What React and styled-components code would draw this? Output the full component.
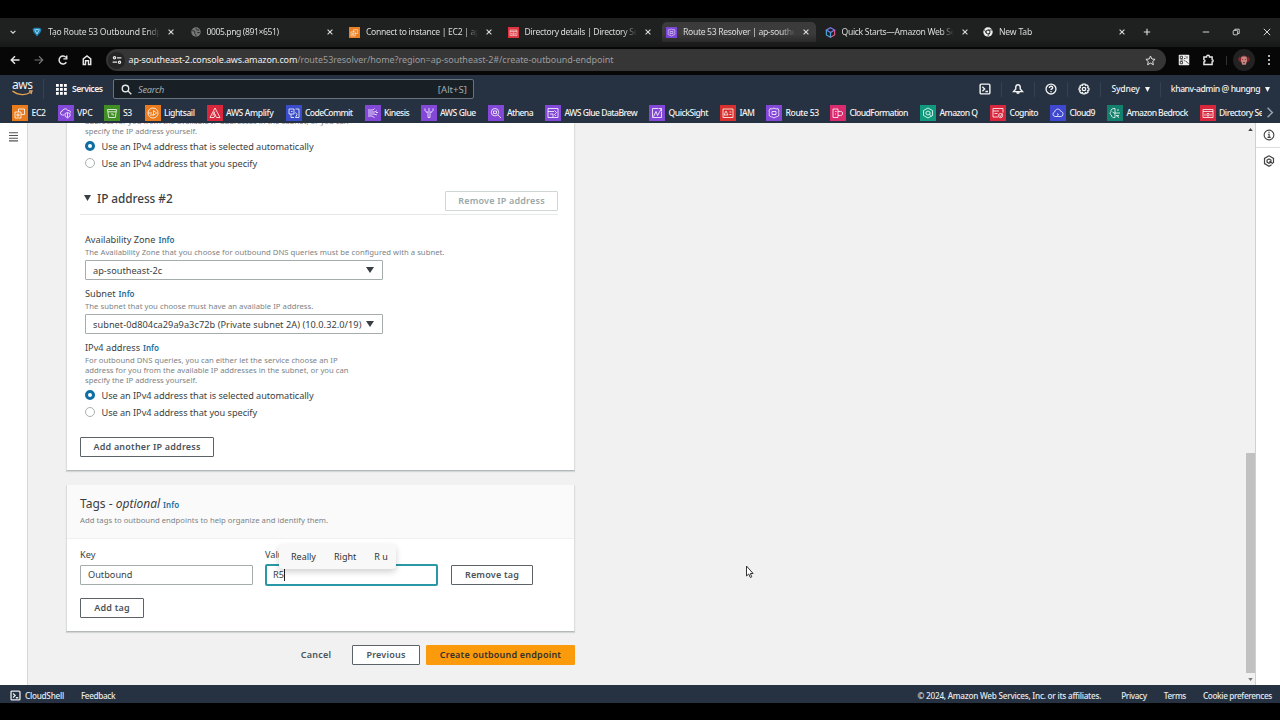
import React, { useState } from "react";
import styled, { createGlobalStyle } from "styled-components";

const GlobalStyle = createGlobalStyle`
  * { box-sizing: border-box; }
  body {
    margin: 0;
    background: #000;
    font-family: "Noto Sans", "Open Sans", sans-serif;
    overflow: hidden;
  }
  button, input { font-family: inherit; }
  svg { display: block; flex: none; }
`;

const Screen = styled.div`
  width: 1280px;
  height: 720px;
  padding: 18px 0 17px;
  background: #000;
  display: flex;
  flex-direction: column;
`;

/* ---------- browser ---------- */

const TabStrip = styled.div`
  height: 29px;
  flex: none;
  display: flex;
  align-items: flex-start;
  padding-top: 4px;
  background: linear-gradient(#1f2020 0, #1f2020 70%, #181818 100%);
  color: #dcdcdc;
`;

const TabSearch = styled.div`
  width: 28px;
  height: 20px;
  padding-left: 10px;
  display: flex;
  align-items: center;
`;

const Tab = styled.div`
  width: ${(p) => (p.$active ? 153.5 : 158.5)}px;
  height: 20px;
  flex: none;
  display: flex;
  align-items: center;
  padding-left: 4px;
  margin-right: ${(p) => (p.$active ? 5 : 0)}px;
  border-radius: 5px 5px 0 0;
  background: ${(p) => (p.$active ? "linear-gradient(#3b3b3c 60%, #2a2a2b)" : "transparent")};
`;

const TabTitle = styled.div`
  width: 112px;
  margin: 0 8px 0 6px;
  font-size: 8.6px;
  line-height: 18px;
  letter-spacing: ${(p) => p.$ls || -0.32}px;
  white-space: nowrap;
  overflow: hidden;
  mask-image: linear-gradient(90deg, #000 88%, transparent);
`;

const NewTabButton = styled.div`
  height: 20px;
  display: flex;
  align-items: center;
  margin-left: 5px;
`;

const WindowButtons = styled.div`
  height: 20px;
  display: flex;
  align-items: center;
  gap: 22.5px;
  margin-left: 51px;
`;

const Toolbar = styled.div`
  height: 28px;
  flex: none;
  display: flex;
  align-items: center;
  padding: 0 0 2px 9px;
  background: #070707;
  color: #e8e8e8;
`;

const NavIcons = styled.div`
  width: 97px;
  display: flex;
  gap: 12px;
  align-items: center;
`;

const UrlBar = styled.div`
  width: 1060px;
  height: 22px;
  border-radius: 11px;
  background: #363637;
  display: flex;
  align-items: center;
  padding: 0 10px 0 2px;
`;

const SiteInfo = styled.div`
  width: 17px;
  height: 17px;
  border-radius: 50%;
  background: #252526;
  display: flex;
  align-items: center;
  justify-content: center;
`;

const UrlText = styled.div`
  flex: 1;
  margin-left: 3.5px;
  padding-bottom: 1px;
  font-size: 9px;
  letter-spacing: -0.05px;
  color: #9c9c9c;
  b {
    font-weight: 400;
    letter-spacing: -0.14px;
    color: #f0f0f0;
  }
`;

const Extensions = styled.div`
  display: flex;
  align-items: center;
  gap: 12px;
  margin-left: 12px;
`;

const ExtDivider = styled.div`
  width: 1px;
  height: 9px;
  background: #333;
`;

const Avatar = styled.div`
  width: 22px;
  height: 22px;
  border-radius: 50%;
  background: #222;
  display: flex;
  align-items: center;
  justify-content: center;
  margin: 0 0 0 -6px;
`;

/* ---------- aws header ---------- */

const Header = styled.div`
  height: 28px;
  flex: none;
  display: flex;
  align-items: center;
  background: #263241;
  color: #f2f3f3;
  font-size: 9px;
`;

const Logo = styled.div`
  width: 44px;
  height: 20px;
  padding: 0 0 0 12px;
  border-right: 1px solid #36424f;
  display: flex;
  flex-direction: column;
  font-size: 12px;
  line-height: 11px;
  letter-spacing: -0.4px;
`;

const Services = styled.div`
  display: flex;
  align-items: center;
  gap: 5px;
  width: 69px;
  padding-left: 12px;
  font-weight: 600;
  font-size: 8.6px;
  letter-spacing: -0.45px;
`;

const SearchBox = styled.div`
  width: 361px;
  height: 20px;
  border: 1px solid #67737f;
  border-radius: 2px;
  background: #182026;
  display: flex;
  align-items: center;
  padding: 0 6px 0 7px;
  color: #a3abae;
  font-size: 9.6px;
  em {
    flex: 1;
    margin-left: 6px;
    font-size: 9.2px;
    letter-spacing: -0.2px;
  }
`;

const HeaderActions = styled.div`
  margin-left: auto;
  display: flex;
  align-items: center;
  font-size: 8.6px;
  font-weight: 500;
`;

const HeaderAction = styled.div`
  width: ${(p) => p.$w}px;
  height: 15px;
  display: flex;
  align-items: center;
  justify-content: center;
  gap: 5px;
  white-space: nowrap;
  letter-spacing: ${(p) => p.$ls || 0}px;
  border-left: ${(p) => (p.$first ? "none" : "1px solid #344150")};
`;

const Favorites = styled.div`
  height: 20px;
  flex: none;
  display: flex;
  align-items: center;
  padding: 0 0 1px 12px;
  background: #263241;
  color: #f2f3f3;
`;

const Favorite = styled.div`
  width: ${(p) => p.$w}px;
  flex: none;
  display: flex;
  align-items: center;
  gap: 3.5px;
  overflow: hidden;
  white-space: nowrap;
  font-size: 8.6px;
  line-height: 16px;
  font-weight: 500;
  letter-spacing: ${(p) => p.$ls}px;
`;

const ServiceTile = styled.div`
  width: ${(p) => p.$size || 16}px;
  height: ${(p) => p.$size || 16}px;
  flex: none;
  background: ${(p) => p.$color};
  display: flex;
  svg {
    width: 100%;
    height: 100%;
  }
`;

/* ---------- page ---------- */

const Body = styled.div`
  height: 562px;
  flex: none;
  display: flex;
  background: #f1f1f1;
  color: #3a3f44;
`;

const LeftRail = styled.div`
  width: 28px;
  flex: none;
  background: #fff;
  border-right: 1px solid #d8d8d8;
  padding: 9px 0 0 9px;
`;

const Main = styled.div`
  width: 1218px;
  height: 562px;
  overflow: hidden;
  padding-left: 38px;
`;

const Column = styled.div`
  width: 509px;
`;

const Panel = styled.div`
  background: #fff;
  border: 1px solid #dcdede;
  border-top: none;
  border-bottom: 1px solid #b4b8b8;
  box-shadow: 0 1px 1px rgba(0, 28, 36, 0.12);
`;

const AddressPanel = styled(Panel)`
  height: 348px;
  overflow: hidden;
`;

const Field = styled.div`
  margin-left: 18px;
  margin-top: ${(p) => p.$mt || 0}px;
`;

const Label = styled.div`
  font-size: 9.2px;
  line-height: 12px;
  white-space: nowrap;
`;

const Info = styled.a`
  font-size: 8px;
  font-weight: 600;
  color: #1a6e9d;
  margin-left: 3px;
`;

const Description = styled.div`
  width: ${(p) => p.$w || 440}px;
  margin-top: ${(p) => p.$mt || 1}px;
  font-size: 7.7px;
  line-height: 10px;
  letter-spacing: ${(p) => p.$ls || 0.03}px;
  white-space: nowrap;
  color: #7c8386;
`;

const RadioRow = styled.div`
  height: 16px;
  margin-top: 1px;
  display: flex;
  align-items: center;
  gap: 6.5px;
  font-size: 9.2px;
  letter-spacing: -0.05px;
`;

const RadioGroup = styled.div`
  padding-top: 1px;
`;

const Radio = styled.span`
  width: 10px;
  height: 10px;
  border-radius: 50%;
  background: #fff;
  border: ${(p) => (p.$checked ? "3px solid #0f6ea3" : "1px solid #a9afb0")};
`;

const SectionHead = styled.div`
  height: 25px;
  margin: 19px 16px 0 13px;
  border-bottom: 1px solid #e6e9e9;
  display: flex;
  align-items: flex-start;
  justify-content: space-between;
`;

const SectionTitle = styled.div`
  display: flex;
  align-items: center;
  gap: 6px;
  height: 16px;
  padding-left: 4px;
  font-size: 11.8px;
  font-weight: 500;
  letter-spacing: -0.05px;
`;

const Button = styled.button`
  width: ${(p) => p.$w}px;
  height: 20px;
  margin: ${(p) => p.$m || "0"};
  padding: 0 0 1px;
  display: block;
  flex: none;
  border-radius: 1px;
  border: 1px solid ${(p) => (p.disabled ? "#d0d6d6" : "#5c6368")};
  background: #fff;
  color: ${(p) => (p.disabled ? "#9aa8a8" : "#4b5359")};
  font-size: 9px;
  font-weight: 600;
  letter-spacing: 0.2px;
  white-space: nowrap;
`;

const PrimaryButton = styled(Button)`
  background: #fb9b0c;
  border-color: #fb9b0c;
  color: #33302a;
`;

const LinkButton = styled(Button)`
  border-color: transparent;
  background: transparent;
`;

const Select = styled.div`
  width: 298px;
  height: 20px;
  margin-top: 3px;
  border: 1px solid #a5acac;
  border-radius: 1px;
  display: flex;
  align-items: center;
  justify-content: space-between;
  padding: 0 8px 0 7px;
  font-size: 9.2px;
  letter-spacing: ${(p) => p.$ls || 0}px;
  white-space: nowrap;
`;

const TagsPanel = styled(Panel)`
  height: 147px;
  margin-top: 14px;
`;

const TagsHead = styled.div`
  height: 54px;
  padding: 11px 13px 0;
  background: #fafafa;
  border-bottom: 1px solid #eff1f1;
`;

const TagsTitle = styled.div`
  font-size: 12px;
  line-height: 16px;
`;

const TagGrid = styled.div`
  display: grid;
  grid-template-columns: 173px 173px 83px;
  column-gap: 12px;
  row-gap: 4px;
  padding: 10px 13px 0;
  align-items: end;
  justify-items: stretch;
`;

const ValueCell = styled.div`
  position: relative;
`;

const TextBox = styled.div`
  height: 20px;
  border: 1px solid #a5acac;
  border-radius: 1px;
  padding: 0 7px 1px;
  display: flex;
  align-items: center;
  font-size: 9.2px;
`;

const FocusedBox = styled(TextBox)`
  height: 22px;
  margin: -1px 0;
  border: 2px solid #2a98a5;
  border-radius: 2px;
  padding: 0 6px 1px;
`;

const Caret = styled.span`
  width: 1px;
  height: 12px;
  background: #222;
`;

/* IME suggestions float over the label and the input */
const Suggestions = styled.div`
  position: absolute;
  left: 14px;
  top: -21px;
  width: 117px;
  height: 25px;
  border-radius: 4px;
  background: #f8f8f8;
  box-shadow: 0 3px 6px rgba(0, 0, 0, 0.18);
  display: flex;
  align-items: center;
  gap: 18px;
  padding-left: 12px;
  font-size: 9px;
  white-space: nowrap;
  color: #333;
`;

const Actions = styled.div`
  display: flex;
  justify-content: flex-end;
  gap: 6px;
  margin-top: 13px;
`;

const Scrollbar = styled.div`
  width: 9px;
  flex: none;
  display: flex;
  flex-direction: column;
  align-items: center;
  justify-content: space-between;
  padding: 5px 0 4px;
  background: #f1f1f1;
`;

const Thumb = styled.div`
  width: 9px;
  height: 220px;
  margin-top: auto;
  margin-bottom: 5px;
  background: #c1c1c1;
`;

const RightRail = styled.div`
  flex: 1;
  background: #fff;
  border-left: 1px solid #d0d0d0;
`;

const RailButton = styled.div`
  height: 25px;
  padding-left: 2px;
  display: flex;
  align-items: center;
  justify-content: center;
  border-bottom: ${(p) => (p.$line ? "1px solid #ddd" : "none")};
`;

const Footer = styled.div`
  height: 18px;
  flex: none;
  display: flex;
  align-items: center;
  padding: 2px 8px 0 10px;
  background: #263241;
  color: #e6ebee;
  font-size: 8.2px;
  font-weight: 500;
`;

const FooterItem = styled.span`
  margin-left: ${(p) => p.$ml}px;
  letter-spacing: ${(p) => p.$ls || -0.35}px;
  white-space: nowrap;
`;

const FooterSpacer = styled.span`
  flex: 1;
`;

const Pointer = styled.svg`
  position: absolute;
  left: 745px;
  top: 565px;
`;

/* ---------- icons ---------- */

const Icon = ({ w = 10, h, box = 16, sw = 1.6, children }) => (
  <svg
    width={w}
    height={h || w}
    viewBox={`0 0 ${box} ${box}`}
    fill="none"
    stroke="currentColor"
    strokeWidth={sw}
  >
    {children}
  </svg>
);

const CloseIcon = ({ w = 6, sw = 1.8 }) => (
  <Icon w={w} box={10} sw={sw}>
    <path d="M1 1l8 8M9 1l-8 8" />
  </Icon>
);

const Down = ({ w = 8, h = 6 }) => (
  <svg width={w} height={h} viewBox="0 0 8 6" preserveAspectRatio="none" fill="currentColor">
    <path d="M0 0h8L4 6z" />
  </svg>
);

const ShellIcon = ({ w = 12 }) => (
  <Icon w={w} sw={1.9}>
    <rect x="1.5" y="1.5" width="13" height="13" rx="1.5" />
    <path d="M4.5 5l3 3-3 3M8.5 11.3h3.5" />
  </Icon>
);

const glyphs = {
  ec2: <path d="M3 7h6v6H3zM6.500 7V4H12.500v5.500H9M5 9h2v2H5z" />,
  vpc: <path d="M6 10H4.500a2 2 0 010-4c.3-2.500 4.500-3 5.200-.500 2-.3 3 .8 2.800 2M7 8.500l2.500-1 2.500 1v2.500l-2.500 2-2.500-2zM9.500 8v4.500" />,
  s3: <path d="M3.500 4.500h9l-1.200 8H4.700zM4 6.800h8M7 9h2.200v1.700" />,
  lightsail: <path d="M8 3a5 5 0 100 10A5 5 0 008 3zM3 8h4M5 10h3M8.500 5.500v4.800L11.500 8z" />,
  amplify: <path d="M8 3L3 12.500h4L8.500 9.500M8 3l5 9.500H9.500L6.500 7.500M5.800 10.500L8 6.500" />,
  commit: <path d="M3 4h5v5H3zM5 9v3.500h3M9.500 4H13v8.500H9.500l1.500-3-1.500-2M5 6.500h1.500" />,
  kinesis: <path d="M3 5h5l1.500-1.500M3 7h7l2-1.500M3 9h6l3 1M3 11h4l2.500 1.500M11 7.500h2" />,
  glue: <path d="M4 3.500v2L7 8.500v4h2v-4l3-3v-2M8 3v3M5.500 7h5" />,
  athena: <path d="M7 3.500a3.700 3.700 0 100 7.400 3.700 3.700 0 000-7.400zM10 10l3 3M5.500 6h3v2.500h-3z" />,
  databrew: <path d="M3 3.500h10v9H3zM3 6.500h6M5 9h3v3M9.500 5.500l2 2-2 2 1.500 1.500" />,
  quicksight: <path d="M12.500 6.500v6h-9v-9h6M4.500 11.500l2.500-5 1.500 4L12.500 3.500M10 3.500h2.500V6" />,
  iam: <path d="M3 4h10v8.500H3zM6 6l2 4H4zM9.500 7h2M9.500 9.500h2" />,
  route53: <path d="M4 3.500c1.500.800 2.500.5 4-.5 1.500 1 2.500 1.300 4 .5l1 2.500c-1 2 .500 3-.5 5-1.500 1-3 .800-4.500 2-1.500-1.200-3-1-4.500-2-1-2 .500-3-.5-5zM6 6.500h4v3H6z" />,
  cfn: <path d="M3 4h5v8.500H3zM5 6.500h1.500M5 9h1M8 6.500h2.500a1.800 1.800 0 012 2.500c0 1-.8 1.500-2 1.500H8" />,
  q: <path d="M8 3l4.500 2.500v5L8 13l-4.500-2.500v-5zM8 6l2 1v2l-2 1-2-1V7zM9 9l2.500 2" />,
  cognito: <path d="M8 12H3V3.500h10v4M3 6h6M4.500 8.500h3M10.500 8.500a2 2 0 100 4.200 2 2 0 000-4.200zM9.500 10.500l1 1 2-3" />,
  cloud9: <path d="M5 11.500a2.300 2.300 0 01-.3-4.500c.3-3.500 5.300-3.800 6-.700 3 .200 3 5.200.3 5.200zM7 8.500l1.500 1L7 10.500" />,
  bedrock: <path d="M8 3.500C5 3 3.500 5 4 6.500c-1.500 1.500-1 3 .3 3.500 0 2 2 3 3.700 2.500zM5.500 7L8 8.500M10 5h2M8 8h5M9 10.500h3M12 12.500L9.500 11" />,
  directory: <path d="M3 4.500h10v8H3zM3 6.500h10M5 8.500v2.500M7 8.500h2v2.500H7zM11 8.500v2.500" />,
};

const Tile = ({ name, color, size }) => (
  <ServiceTile $color={color} $size={size}>
    <svg viewBox="0 0 16 16" fill="none" stroke="#fff" strokeOpacity=".88" strokeWidth=".9">
      {glyphs[name]}
    </svg>
  </ServiceTile>
);

const tabs = [
  {
    title: "Tạo Route 53 Outbound Endpoint",
    ls: -0.2,
    icon: (
      <Icon w={10}>
        <path d="M1 3l3-2h8l3 2-1 5-6 7-6-7z" fill="#1d83b5" stroke="none" />
        <path d="M4 4l4 7 4-7M5.500 4h5" stroke="#a5dbf2" />
      </Icon>
    ),
  },
  {
    title: "0005.png (891×651)",
    ls: -0.42,
    icon: (
      <Icon w={10}>
        <circle cx="8" cy="8" r="7.500" fill="#777" stroke="none" />
        <path d="M2 6c4 0 5 1 4 3s2 2 2 5M8 2c0 3 2 3 5 3M10 9h4" stroke="#242424" />
      </Icon>
    ),
  },
  { title: "Connect to instance | EC2 | ap-southeast", icon: <Tile name="ec2" color="#ec7f22" size={11} /> },
  { title: "Directory details | Directory Service", icon: <Tile name="directory" color="#dc3540" size={11} /> },
  { title: "Route 53 Resolver | ap-southeast", icon: <Tile name="route53" color="#7b45d6" size={11} />, active: true },
  {
    title: "Quick Starts—Amazon Web Services",
    icon: (
      <Icon w={11} sw={1.7}>
        <path d="M8 1l6 3.500L8 8 2 4.500z" stroke="#7a7cf0" />
        <path d="M2 4.500v7L8 15V8" stroke="#48a9dd" />
        <path d="M8 15l6-3.500v-7" stroke="#e35a8d" />
      </Icon>
    ),
  },
  {
    title: "New Tab",
    ls: -0.2,
    icon: (
      <Icon w={10}>
        <circle cx="8" cy="8" r="7.500" fill="#eee" stroke="none" />
        <circle cx="8" cy="8" r="3.200" stroke="#222" />
        <path d="M8 4.800h7M5.200 9.500L2 4M10.800 9.500L7.500 15" stroke="#222" strokeWidth="1.300" />
      </Icon>
    ),
  },
];

// label, glyph, tile colour, cell width, letter spacing
const favorites = [
  ["EC2", "ec2", "#ea7b1c", 45.5, -0.4],
  ["VPC", "vpc", "#8348d8", 46, -0.2],
  ["S3", "s3", "#3f8f25", 41, -0.4],
  ["Lightsail", "lightsail", "#ea7b1c", 62, -0.45],
  ["AWS Amplify", "amplify", "#d8273c", 79, -0.4],
  ["CodeCommit", "commit", "#3b4ccb", 79, -0.62],
  ["Kinesis", "kinesis", "#8348d8", 56, -0.5],
  ["AWS Glue", "glue", "#8348d8", 67, -0.42],
  ["Athena", "athena", "#8348d8", 57.5, -0.6],
  ["AWS Glue DataBrew", "databrew", "#8348d8", 104, -0.53],
  ["QuickSight", "quicksight", "#8348d8", 71, -0.5],
  ["IAM", "iam", "#d8302f", 46, -0.6],
  ["Route 53", "route53", "#8348d8", 64, -0.4],
  ["CloudFormation", "cfn", "#d92b6d", 90, -0.58],
  ["Amazon Q", "q", "#109a7d", 70, -0.55],
  ["Cognito", "cognito", "#d8273c", 60, -0.55],
  ["Cloud9", "cloud9", "#4048d0", 57, -0.55],
  ["Amazon Bedrock", "bedrock", "#12806c", 92.5, -0.58],
  ["Directory Service", "directory", "#d8273c", 62, -0.47],
];

const AddressChoice = ({ children }) => (
  <>
    <Description $w={272} $ls={0.01}>
      {children}
      address for you from the available IP addresses in the subnet, or you can
      <br />
      specify the IP address yourself.
    </Description>
    <RadioGroup>
      <RadioRow>
        <Radio $checked />
        Use an IPv4 address that is selected automatically
      </RadioRow>
      <RadioRow>
        <Radio />
        Use an IPv4 address that you specify
      </RadioRow>
    </RadioGroup>
  </>
);

const Browser = () => (
  <>
    <TabStrip>
      <TabSearch>
        <Icon w={6} box={10} sw={2}>
          <path d="M1 3l4 4 4-4" />
        </Icon>
      </TabSearch>
      {tabs.map((t) => (
        <Tab key={t.title} $active={t.active}>
          {t.icon}
          <TabTitle $ls={t.ls}>{t.title}</TabTitle>
          <CloseIcon />
        </Tab>
      ))}
      <NewTabButton>
        <Icon w={8} box={10} sw={1.4}>
          <path d="M5 1v8M1 5h8" />
        </Icon>
      </NewTabButton>
      <WindowButtons>
        <Icon w={8} box={10} sw={1.2}>
          <path d="M1 5h8" />
        </Icon>
        <Icon w={8} box={10} sw={1.1}>
          <rect x="1.500" y="3" width="5.500" height="5.500" rx="1" />
          <path d="M3.500 2.500V1.500H9v5.500H7.500" />
        </Icon>
        <CloseIcon w={8} sw={1.2} />
      </WindowButtons>
    </TabStrip>
    <Toolbar>
      <NavIcons>
        <Icon w={12} sw={1.900}>
          <path d="M14 8H3M8 3L3 8l5 5" />
        </Icon>
        <Icon w={12} sw={1.500}>
          <path d="M2 8h11M8 3l5 5-5 5" stroke="#777" />
        </Icon>
        <Icon w={12} sw={1.900}>
          <path d="M12.500 11A5.300 5.300 0 1112 4.500M13 2v4.500H8.500" />
        </Icon>
        <Icon w={12} sw={1.900}>
          <path d="M3 14V6.500L8 2.500l5 4V14h-3V9H6v5z" />
        </Icon>
      </NavIcons>
      <UrlBar>
        <SiteInfo>
          <Icon w={10} sw={2}>
            <path d="M8 4.500h7M1 11.500h7" />
            <circle cx="4" cy="4.500" r="1.800" />
            <circle cx="12" cy="11.500" r="1.800" />
          </Icon>
        </SiteInfo>
        <UrlText>
          <b>ap-southeast-2.console.aws.amazon.com</b>
          /route53resolver/home?region=ap-southeast-2#/create-outbound-endpoint
        </UrlText>
        <Icon w={11} sw={1.400}>
          <path d="M8 1.500l2 4.300 4.700.5-3.500 3.200 1 4.700L8 11.800l-4.200 2.400 1-4.700L1.300 6.300l4.700-.5z" />
        </Icon>
      </UrlBar>
      <Extensions>
        <Icon w={12}>
          <rect x="1" y="1" width="14" height="14" rx="1" fill="#eee" stroke="none" />
          <path d="M3 3h3v3H3zM3 10h3v3H3zM9 3h1M12 3v3M8 6h2M8 9h1M3 8h4M10 9l4 4" stroke="#333" strokeWidth="1.200" />
        </Icon>
        <Icon w={12} sw={1.900}>
          <path d="M2.500 4H6c0-3 4-3 4 0h3.500v3.500c1.800 0 1.800 3 0 3V14h-11v-3.500c2 0 2-3 0-3z" />
        </Icon>
        <ExtDivider />
        <Avatar>
          <Icon w={14}>
            <path d="M1 7l2-3 2 2 3-4 3 4 2-2 2 3-2 3H3z" fill="#84252b" stroke="none" />
            <path d="M5 4h6l.5 5L10 13.500H6L4.500 9z" fill="#c98580" stroke="none" />
            <path d="M6 7.500h1M9 7.500h1M7 11h2" stroke="#4b2527" strokeWidth="1" />
          </Icon>
        </Avatar>
        <svg width="4" height="12" viewBox="0 0 4 12" fill="#eee">
          <circle cx="2" cy="2" r="1" />
          <circle cx="2" cy="6" r="1" />
          <circle cx="2" cy="10" r="1" />
        </svg>
      </Extensions>
    </Toolbar>
  </>
);

const Console = () => (
  <>
    <Header>
      <Logo>
        aws
        <svg width="21" height="6" viewBox="0 0 21 6" fill="none" stroke="#e8a552" strokeWidth="1.300">
          <path d="M.5 1C6 5.500 14 5.500 18.500 2.200M17 1h3l-1 3" />
        </svg>
      </Logo>
      <Services>
        <svg width="11" height="11" viewBox="0 0 11 11" fill="#fff">
          {[0, 4, 8].map((y) =>
            [0, 4, 8].map((x) => <rect key={`${x}-${y}`} x={x} y={y} width="2.800" height="2.800" />)
          )}
        </svg>
        Services
      </Services>
      <SearchBox>
        <Icon w={11} sw={2}>
          <g stroke="#e5e8ea">
            <circle cx="6.500" cy="6.500" r="4.700" />
            <path d="M10 10l5 5" />
          </g>
        </Icon>
        <em>Search</em>
        [Alt+S]
      </SearchBox>
      <HeaderActions>
        <HeaderAction $w={33} $first>
          <ShellIcon />
        </HeaderAction>
        <HeaderAction $w={33}>
          <Icon w={12} sw={1.900}>
            <path d="M2 11.500L5 8V6c0-5 6-5 6 0v2l3 3.500zM6.500 12c0 2.500 3 2.500 3 0" />
          </Icon>
        </HeaderAction>
        <HeaderAction $w={33}>
          <Icon w={12} sw={1.800}>
            <circle cx="8" cy="8" r="6.600" />
            <path d="M5.800 6.500c0-3 4.500-2.600 4.500-.3 0 1.600-2.300 1.600-2.300 3.200M8 10.800v1.500" />
          </Icon>
        </HeaderAction>
        <HeaderAction $w={33}>
          <Icon w={12} sw={1.700}>
            <path d="M6.500 1.500h3l.6 1.700 1.800-.6 1.700 2-.7 1.700 1.700.8v2.300l-1.700.7.6 1.800-2 1.700-1.700-.7-.6 1.700H6.700L6 12.900l-1.800.7-1.900-2 .8-1.700-1.700-.8V6.800l1.700-.7-.6-1.700 2-1.800 1.500.7z" />
            <circle cx="8" cy="8" r="2.300" />
          </Icon>
        </HeaderAction>
        <HeaderAction $w={60} $ls={-0.2}>
          Sydney <Down w={5} h={5} />
        </HeaderAction>
        <HeaderAction $w={120} $ls={-0.45}>
          khanv-admin @ hungng <Down w={5} h={5} />
        </HeaderAction>
      </HeaderActions>
    </Header>
    <Favorites>
      {favorites.map(([label, glyph, color, w, ls]) => (
        <Favorite key={label} $w={w} $ls={ls}>
          <Tile name={glyph} color={color} />
          {label}
        </Favorite>
      ))}
      <Icon w={15} sw={1.6}>
        <path d="M6 3l5 5-5 5" stroke="#9ba6ae" />
      </Icon>
    </Favorites>
  </>
);

const App = () => {
  const [tagValue] = useState("R5");

  return (
    <Screen>
      <GlobalStyle />
      <Browser />
      <Console />
      <Body>
        <LeftRail>
          <svg width="9" height="10" viewBox="0 0 9 10" stroke="#555" strokeWidth="1.100">
            <path d="M0 .8h9M0 3.500h9M0 6.200h9M0 8.900h9" />
          </svg>
        </LeftRail>
        <Main>
          <Column>
            <AddressPanel>
              <Field $mt={-8}>
                <AddressChoice />
              </Field>
              <SectionHead>
                <SectionTitle>
                  <Down w={7} h={6} />
                  IP address #2
                </SectionTitle>
                <Button $w={113} $m="1px 0 0" disabled>
                  Remove IP address
                </Button>
              </SectionHead>
              <Field $mt={19}>
                <Label>
                  Availability Zone<Info>Info</Info>
                </Label>
                <Description>
                  The Availability Zone that you choose for outbound DNS queries must be configured with a subnet.
                </Description>
                <Select>
                  ap-southeast-2c <Down />
                </Select>
              </Field>
              <Field $mt={8}>
                <Label>
                  Subnet<Info>Info</Info>
                </Label>
                <Description>The subnet that you choose must have an available IP address.</Description>
                <Select $ls={0.05}>
                  subnet-0d804ca29a9a3c72b (Private subnet 2A) (10.0.32.0/19) <Down />
                </Select>
              </Field>
              <Field $mt={8}>
                <Label>
                  IPv4 address<Info>Info</Info>
                </Label>
                <AddressChoice>
                  For outbound DNS queries, you can either let the service choose an IP
                  <br />
                </AddressChoice>
              </Field>
              <Button $w={134} $m="17px 0 0 13px">
                Add another IP address
              </Button>
            </AddressPanel>

            <TagsPanel>
              <TagsHead>
                <TagsTitle>
                  Tags - <i>optional</i>
                  <Info>Info</Info>
                </TagsTitle>
                <Description $mt={2}>Add tags to outbound endpoints to help organize and identify them.</Description>
              </TagsHead>
              <TagGrid>
                <Label>Key</Label>
                <Label>Value</Label>
                <span />
                <TextBox>Outbound</TextBox>
                <ValueCell>
                  <FocusedBox>
                    {tagValue}
                    <Caret />
                  </FocusedBox>
                  <Suggestions>
                    <span>Really</span>
                    <span>Right</span>
                    <span>R u</span>
                  </Suggestions>
                </ValueCell>
                <Button $w={82} $m="0 0 0 1px">
                  Remove tag
                </Button>
              </TagGrid>
              <Button $w={64} $m="13px 0 0 13px">
                Add tag
              </Button>
            </TagsPanel>
            <Actions>
              <LinkButton $w={60}>Cancel</LinkButton>
              <Button $w={68}>Previous</Button>
              <PrimaryButton $w={149}>Create outbound endpoint</PrimaryButton>
            </Actions>
          </Column>
        </Main>
        <Scrollbar>
          <svg width="5" height="3" viewBox="0 0 6 4" fill="#444">
            <path d="M3 0l3 4H0z" />
          </svg>
          <Thumb />
          <svg width="5" height="3" viewBox="0 0 6 4" fill="#777">
            <path d="M0 0h6L3 4z" />
          </svg>
        </Scrollbar>
        <RightRail>
          <RailButton $line>
            <Icon w={12} sw={1.500}>
              <g stroke="#444">
                <circle cx="8" cy="8" r="6.500" />
                <path d="M6.500 7h1.700v4M6 11.200h4.300M7.300 4.500h1.400" />
              </g>
            </Icon>
          </RailButton>
          <RailButton>
            <Icon w={12} sw={1.600}>
              <path d="M8 1l6 3.500v6M11.500 13L8 15l-6-3.500v-7L8 1M8 5.200l2.600 1.500v2.800L8 11 5.400 9.500V6.700zM8.500 8.500l5 3" stroke="#444" />
            </Icon>
          </RailButton>
        </RightRail>
      </Body>
      <Footer>
        <ShellIcon w={11} />
        <FooterItem $ml={4} $ls={-0.25}>CloudShell</FooterItem>
        <FooterItem $ml={17}>Feedback</FooterItem>
        <FooterSpacer />
        <FooterItem $ls={-0.24}>© 2024, Amazon Web Services, Inc. or its affiliates.</FooterItem>
        <FooterItem $ml={20}>Privacy</FooterItem>
        <FooterItem $ml={17}>Terms</FooterItem>
        <FooterItem $ml={17}>Cookie preferences</FooterItem>
      </Footer>
      <Pointer width="9" height="14" viewBox="0 0 9 14" fill="#fff" stroke="#333" strokeWidth="1">
        <path d="M1.500 1v10l2.200-2 1.600 3.500 1.500-.7L5.300 8.500h2.800z" />
      </Pointer>
    </Screen>
  );
};

export default App;
